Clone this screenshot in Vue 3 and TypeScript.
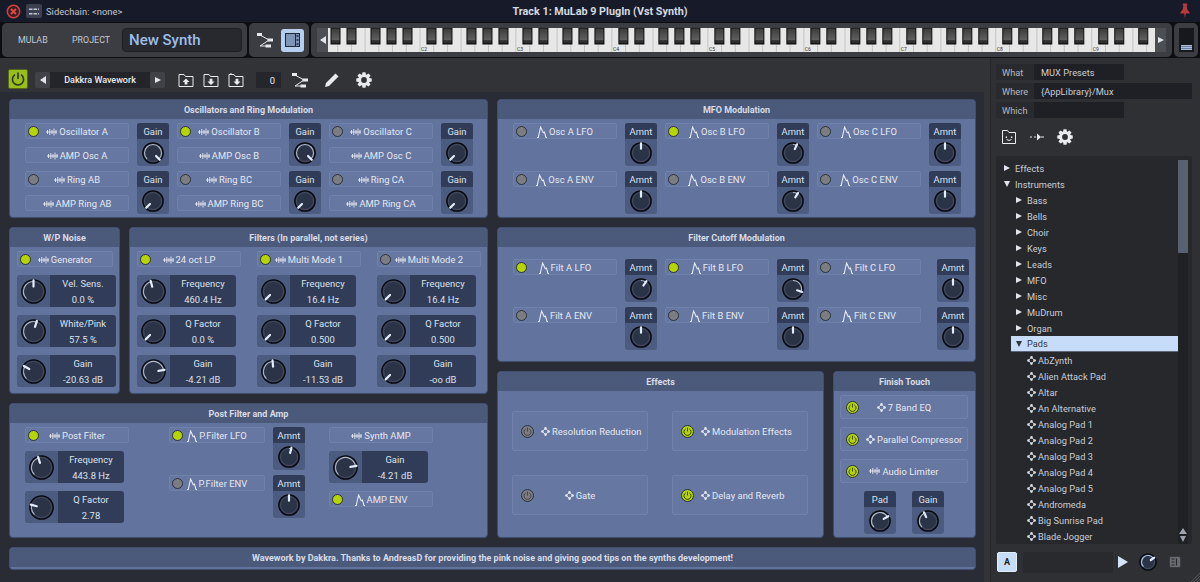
<script setup lang="ts">
import { h } from 'vue'

type Led = 'on' | 'off' | undefined
interface Item {
  t: 'btn' | 'box' | 'row' | 'gap'
  label?: string
  value?: string
  icon?: string
  led?: Led
  pow?: boolean
  a?: number
  bi?: boolean
}
interface Cell { cls?: string; items: Item[] }
interface Panel { cls: string; title: string; cells: Cell[] }

const btn = (label: string, icon: string, led?: Led, pow = false): Item => ({ t: 'btn', label, icon, led, pow })
const box = (label: string, a: number, bi = false): Item => ({ t: 'box', label, a, bi })
const row = (label: string, value: string, a: number): Item => ({ t: 'row', label, value, a })
const gap: Item = { t: 'gap' }

const panels: Panel[] = [
  { cls: 'p-osc', title: 'Oscillators and Ring Modulation', cells: [
    { items: [btn('Oscillator A', 'osc', 'on'), box('Gain', 135), btn('AMP Osc A', 'osc')] },
    { items: [btn('Oscillator B', 'osc', 'on'), box('Gain', 135), btn('AMP Osc B', 'osc')] },
    { items: [btn('Oscillator C', 'osc', 'off'), box('Gain', -135), btn('AMP Osc C', 'osc')] },
    { items: [btn('Ring AB', 'osc', 'off'), box('Gain', -135), btn('AMP Ring AB', 'osc')] },
    { items: [btn('Ring BC', 'osc', 'off'), box('Gain', -135), btn('AMP Ring BC', 'osc')] },
    { items: [btn('Ring CA', 'osc', 'off'), box('Gain', -135), btn('AMP Ring CA', 'osc')] },
  ] },
  { cls: 'p-mfo', title: 'MFO Modulation', cells: [
    { items: [btn('Osc A LFO', 'env', 'off'), box('Amnt', 0, true)] },
    { items: [btn('Osc B LFO', 'env', 'on'), box('Amnt', 25, true)] },
    { items: [btn('Osc C LFO', 'env', 'off'), box('Amnt', 0, true)] },
    { items: [btn('Osc A ENV', 'env', 'off'), box('Amnt', 0, true)] },
    { items: [btn('Osc B ENV', 'env', 'off'), box('Amnt', 32, true)] },
    { items: [btn('Osc C ENV', 'env', 'off'), box('Amnt', 0, true)] },
  ] },
  { cls: 'p-noise', title: 'W/P Noise', cells: [
    { cls: 'col', items: [btn('Generator', 'osc', 'on'), row('Vel. Sens.', '0.0 %', 0), row('White/Pink', '57.5 %', 18), row('Gain', '-20.63 dB', -60)] },
  ] },
  { cls: 'p-filt', title: 'Filters (In parallel, not series)', cells: [
    { cls: 'col', items: [btn('24 oct LP', 'osc', 'on'), row('Frequency', '460.4 Hz', -15), row('Q Factor', '0.0 %', -135), row('Gain', '-4.21 dB', 82)] },
    { cls: 'col', items: [btn('Multi Mode 1', 'osc', 'on'), row('Frequency', '16.4 Hz', -135), row('Q Factor', '0.500', -135), row('Gain', '-11.53 dB', -5)] },
    { cls: 'col', items: [btn('Multi Mode 2', 'osc', 'off'), row('Frequency', '16.4 Hz', -135), row('Q Factor', '0.500', -135), row('Gain', '-oo dB', -135)] },
  ] },
  { cls: 'p-cut', title: 'Filter Cutoff Modulation', cells: [
    { items: [btn('Filt A LFO', 'env', 'on'), box('Amnt', 35, true)] },
    { items: [btn('Filt B LFO', 'env', 'on'), box('Amnt', 108, true)] },
    { cls: 'wide', items: [btn('Filt C LFO', 'env', 'off'), box('Amnt', 0, true)] },
    { items: [btn('Filt A ENV', 'env', 'off'), box('Amnt', 0, true)] },
    { items: [btn('Filt B ENV', 'env', 'off'), box('Amnt', 0, true)] },
    { cls: 'wide', items: [btn('Filt C ENV', 'env', 'off'), box('Amnt', 0, true)] },
  ] },
  { cls: 'p-post', title: 'Post Filter and Amp', cells: [
    { cls: 'col', items: [btn('Post Filter', 'osc', 'on'), row('Frequency', '443.8 Hz', -18), row('Q Factor', '2.78', -75)] },
    { cls: 'pf-mid', items: [btn('P.Filter LFO', 'env', 'on'), box('Amnt', 15, true), gap, btn('P.Filter ENV', 'env', 'off'), box('Amnt', 0, true)] },
    { cls: 'col pf-amp', items: [btn('Synth AMP', 'osc'), row('Gain', '-4.21 dB', 82), btn('AMP ENV', 'env', 'on')] },
  ] },
  { cls: 'p-fx', title: 'Effects', cells: [
    { items: [btn('Resolution Reduction', 'mux', 'off', true)] },
    { items: [btn('Modulation Effects', 'mux', 'on', true)] },
    { items: [btn('Gate', 'mux', 'off', true)] },
    { items: [btn('Delay and Reverb', 'mux', 'on', true)] },
  ] },
  { cls: 'p-fin', title: 'Finish Touch', cells: [
    { items: [btn('7 Band EQ', 'mux', 'on', true), btn('Parallel Compressor', 'mux', 'on', true), btn('Audio Limiter', 'osc', 'on', true), box('Pad', 60), box('Gain', -25)] },
  ] },
  { cls: 'p-foot', title: 'Wavework by Dakkra. Thanks to AndreasD for providing the pink noise and giving good tips on the synths development!', cells: [] },
]

const tree = [
  { label: 'Effects', lv: 0, open: false },
  { label: 'Instruments', lv: 0, open: true },
  ...['Bass', 'Bells', 'Choir', 'Keys', 'Leads', 'MFO', 'Misc', 'MuDrum', 'Organ'].map((label) => ({ label, lv: 1, open: false })),
  { label: 'Pads', lv: 1, open: true, sel: true },
  ...['AbZynth', 'Alien Attack Pad', 'Altar', 'An Alternative', 'Analog Pad 1', 'Analog Pad 2', 'Analog Pad 3', 'Analog Pad 4', 'Analog Pad 5', 'Andromeda', 'Big Sunrise Pad', 'Blade Jogger'].map((label) => ({ label, lv: 2, open: false })),
]

/* Keyboard geometry: octave = 96px, first (clipped) C sits 4px left of the visible edge */
const OCT = 95.97
const whites: number[] = []
const blacks: number[] = []
const labels: { x: number; t: string }[] = []
for (let o = 0; o < 9; o++) {
  const base = -4 + o * OCT
  for (let i = 0; i < 7; i++) whites.push(base + (i * OCT) / 7)
  for (const b of [7, 23, 47, 63, 79]) if (base + b < 815) blacks.push(base + b)
  if (o > 0) labels.push({ x: base + 1, t: 'C' + (o + 1) })
}

const polar = (r: number, deg: number, c: number) => {
  const t = ((deg - 90) * Math.PI) / 180
  return `${(c + r * Math.cos(t)).toFixed(2)} ${(c + r * Math.sin(t)).toFixed(2)}`
}

const Knob = (p: { a: number; d: number; bi?: boolean; blue?: boolean }) => {
  const c = p.d / 2
  const r = c - 0.8
  const from = p.bi ? 0 : -135
  const kids = [
    h('circle', { cx: c, cy: c, r, fill: '#2b3346', stroke: '#07080c', 'stroke-width': 1.3 }),
    h('circle', { cx: c, cy: c, r: r - 1.7, fill: 'none', stroke: '#465168', 'stroke-width': 0.9 }),
  ]
  if (p.a !== from) {
    const lo = Math.min(from, p.a)
    const hi = Math.max(from, p.a)
    kids.push(h('path', {
      d: `M${polar(r - 1.7, lo, c)}A${r - 1.7} ${r - 1.7} 0 ${hi - lo > 180 ? 1 : 0} 1 ${polar(r - 1.7, hi, c)}`,
      fill: 'none', stroke: p.blue ? '#a9c8f0' : '#aeb8ca', 'stroke-width': 1.1,
    }))
  }
  kids.push(h('path', {
    d: `M${polar(r * 0.42, p.a, c)}L${polar(r - 0.6, p.a, c)}`,
    stroke: '#e2ecfb', 'stroke-width': 2.2, 'stroke-linecap': 'round',
  }))
  return h('svg', { width: p.d, height: p.d, viewBox: `0 0 ${p.d} ${p.d}` }, kids)
}

const gearPath = (() => {
  const n = 8
  const pts: string[] = []
  for (let i = 0; i < n; i++) {
    const s = (i * 360) / n
    pts.push(polar(7.9, s - 11, 8), polar(7.9, s + 11, 8), polar(5.7, s + 20, 8), polar(5.7, s + 25, 8))
  }
  return `M${pts.join('L')}Z M8 5.1A2.9 2.9 0 1 0 8 10.9A2.9 2.9 0 1 0 8 5.1Z`
})()

interface IconDef { w: number; h: number; s?: string[]; f?: string[]; sw?: number }
const ICONS: Record<string, IconDef> = {
  osc: { w: 11, h: 8, s: ['M0 4H11M1.5 2v4M3.8 1v6M6 2v4M8 .5v7M10 2v4'], sw: 0.9 },
  env: { w: 10, h: 12, s: ['M0 11.5H1.2L3.6 1L6.2 6.8L7.4 6.1L9 11.5H10'], sw: 1.1 },
  mux: { w: 9, h: 9, s: ['M4.5 1.3L7.7 4.5L4.5 7.7L1.3 4.5Z'], f: ['M3.2 1.4a1.3 1.3 0 1 0 2.6 0a1.3 1.3 0 1 0-2.6 0M3.2 7.6a1.3 1.3 0 1 0 2.6 0a1.3 1.3 0 1 0-2.6 0M.1 4.5a1.3 1.3 0 1 0 2.6 0a1.3 1.3 0 1 0-2.6 0M6.3 4.5a1.3 1.3 0 1 0 2.6 0a1.3 1.3 0 1 0-2.6 0'], sw: 0.9 },
  power: { w: 16, h: 16, s: ['M5 3.6A5.6 5.6 0 1 0 11 3.6M8 1.5V8'], sw: 1.6 },
  powerS: { w: 9, h: 9, s: ['M2.7 1.9A3.5 3.5 0 1 0 6.3 1.9M4.5 .7V4.5'], sw: 1 },
  graph: { w: 16, h: 16, f: ['M0 1h5v3H0zM10.5 6.5h5.5v3h-5.5zM8.5 12.5h5.5v3H8.5z'], s: ['M3 3L12 8L3 14H9'], sw: 1 },
  pencil: { w: 16, h: 16, f: ['M1 15L2 11L11.5 1.5L14.5 4.5L5 14Z'] },
  gear: { w: 16, h: 16, f: [gearPath] },
  folderUp: { w: 16, h: 16, s: ['M1 2.5H6L7.5 4.5H15V14.5H1Z'], f: ['M8 6.5L11.5 10H9.4V12.6H6.6V10H4.5Z'], sw: 1 },
  folderDown: { w: 16, h: 16, s: ['M1 2.5H6L7.5 4.5H15V14.5H1Z'], f: ['M8 13L4.5 9.5H6.6V6.8H9.4V9.5H11.5Z'], sw: 1 },
  folderIn: { w: 16, h: 16, s: ['M1 2.5H6L7.5 4.5H15V14.5H1Z', 'M3 1V3'], f: ['M9 13L5.5 9.5H7.6V6.8H10.4V9.5H12.5Z'], sw: 1 },
  folderFace: { w: 16, h: 16, s: ['M1.5 1.5H6.5L8 3.5H14.5V14.5H1.5Z', 'M5.5 10.5Q8 12.5 10.5 10.5'], f: ['M4.7 7.5h1.4v1.4H4.7zM9.9 7.5h1.4v1.4H9.9z'], sw: 1 },
  dotArrow: { w: 16, h: 16, s: ['M1 8h2M5 8h2M12 8h3'], f: ['M8 4.5L12 8L8 11.5Z'], sw: 1.2 },
  pin: { w: 12, h: 16, f: ['M4 .5H8L8.3 2.5H7.6L8.3 6.6L10.5 9.3V10.4H6.8L6 15.5L5.2 10.4H1.5V9.3L3.7 6.6L4.4 2.5H3.7Z'] },
}

const Ico = (p: { n: string }) => {
  const d = ICONS[p.n]
  const kids = [
    ...(d.s || []).map((x) => h('path', { d: x, fill: 'none', stroke: 'currentColor', 'stroke-width': d.sw || 1 })),
    ...(d.f || []).map((x) => h('path', { d: x, fill: 'currentColor', 'fill-rule': 'evenodd' })),
  ]
  return h('svg', { width: d.w, height: d.h, viewBox: `0 0 ${d.w} ${d.h}` }, kids)
}
</script>

<template>
  <div class="app">
    <header class="title">
      <svg class="close" width="15" height="15" viewBox="0 0 15 15">
        <circle cx="7.5" cy="7.5" r="6.2" fill="#3a1d24" stroke="#c8453f" stroke-width="1.5" />
        <path d="M5 5l5 5M10 5l-5 5" stroke="#e0443f" stroke-width="2.2" />
      </svg>
      <span class="side-ico">
        <svg width="10" height="7" viewBox="0 0 10 7"><path d="M0 1.2h10M0 5.8h10" stroke="#c3c8d2" stroke-width="1.6" stroke-dasharray="3.5 1" /></svg>
      </span>
      <span class="side">Sidechain: &lt;none&gt;</span>
      <span class="title-text">Track 1: MuLab 9 PlugIn (Vst Synth)</span>
      <Ico n="pin" class="pin" />
    </header>

    <div class="top">
      <div class="seg seg-a">
        <span class="tab tab1">MULAB</span>
        <span class="tab tab2">PROJECT</span>
        <div class="synth-name">New Synth</div>
      </div>
      <div class="seg seg-b">
        <Ico n="graph" class="top-graph" />
        <span class="view-btn">
          <svg width="15" height="14" viewBox="0 0 15 14">
            <rect x=".5" y=".5" width="14" height="13" fill="#7f95b8" stroke="#20283a" />
            <path d="M10.5 .5v13" stroke="#20283a" />
            <path d="M11.5 3h2M11.5 7h2M11.5 11h2" stroke="#20283a" stroke-width="1.4" />
          </svg>
        </span>
      </div>
      <div class="seg seg-c">
        <span class="kb-arrow"><i class="tri tri-l" /></span>
        <svg class="keys" width="827" height="24" viewBox="0 0 827 24">
          <defs>
            <linearGradient id="blk" x1="0" y1="0" x2="0" y2="1">
              <stop offset="0" stop-color="#3a3a3a" />
              <stop offset=".75" stop-color="#606060" />
              <stop offset=".76" stop-color="#3a3a3a" />
              <stop offset="1" stop-color="#222" />
            </linearGradient>
          </defs>
          <rect width="827" height="24" fill="#e7e7e7" />
          <path v-for="x in whites" :key="'w' + x" :d="`M${x.toFixed(1)} 0V24`" stroke="#c4c4c4" stroke-width="1" />
          <rect v-for="x in blacks" :key="'b' + x" :x="x" y="0" width="9" height="16" fill="url(#blk)" stroke="#0a0a0a" stroke-width="1" />
          <text v-for="l in labels" :key="l.t" :x="l.x" y="22.5" class="key-label">{{ l.t }}</text>
        </svg>
        <span class="kb-arrow"><i class="tri tri-r" /></span>
      </div>
      <div class="seg seg-d">
        <div class="slot"><i class="slot-level" /></div>
      </div>
    </div>

    <div class="main">
      <div class="plugin">
        <div class="bar">
          <button class="power"><Ico n="power" /></button>
          <div class="preset">
            <span class="pre-arrow"><i class="tri tri-l" /></span>
            <span class="pre-name">Dakkra Wavework</span>
            <span class="pre-arrow"><i class="tri tri-r" /></span>
          </div>
          <Ico n="folderUp" class="bi bi-first" />
          <Ico n="folderDown" class="bi" />
          <Ico n="folderIn" class="bi" />
          <span class="num">0</span>
          <Ico n="graph" class="bi bi-g" />
          <Ico n="pencil" class="bi bi-w" />
          <Ico n="gear" class="bi bi-w" />
        </div>

        <div class="stage">
          <section v-for="p in panels" :key="p.cls" class="panel" :class="p.cls">
            <h2 class="panel-title">{{ p.title }}</h2>
            <div class="panel-body">
              <div v-for="(c, ci) in p.cells" :key="ci" class="cell" :class="c.cls">
                <template v-for="(it, ii) in c.items" :key="ii">
                  <div v-if="it.t === 'btn'" class="btn">
                    <span class="led-slot">
                      <span v-if="it.led" class="led" :class="it.led">
                        <Ico v-if="it.pow" n="powerS" />
                      </span>
                    </span>
                    <span class="btn-label"><Ico :n="it.icon!" class="btn-ico" />{{ it.label }}</span>
                  </div>
                  <div v-else-if="it.t === 'box'" class="box">
                    <span class="box-title">{{ it.label }}</span>
                    <span class="box-knob"><Knob :a="it.a!" :d="22" :bi="it.bi" /></span>
                  </div>
                  <div v-else-if="it.t === 'row'" class="kr">
                    <span class="kr-knob"><Knob :a="it.a!" :d="25" /></span>
                    <span class="kr-text"><span>{{ it.label }}</span><span>{{ it.value }}</span></span>
                  </div>
                  <div v-else class="spacer" />
                </template>
              </div>
            </div>
          </section>
        </div>
      </div>

      <aside class="browser">
        <div class="field"><span class="f-label">What</span><span class="f-val short">MUX Presets</span></div>
        <div class="field"><span class="f-label">Where</span><span class="f-val">{AppLibrary}/Mux</span></div>
        <div class="field"><span class="f-label">Which</span><span class="f-val short" /></div>
        <div class="b-tools">
          <Ico n="folderFace" />
          <Ico n="dotArrow" />
          <Ico n="gear" />
        </div>
        <div class="tree">
          <ul class="tree-list">
            <li v-for="n in tree" :key="n.label" class="node" :class="['lv' + n.lv, { sel: (n as any).sel }]">
              <i v-if="n.lv < 2" class="tri" :class="n.open ? 'tri-d' : 'tri-r'" />
              <Ico v-else n="mux" class="node-ico" />
              <span>{{ n.label }}</span>
            </li>
          </ul>
          <div class="scroll">
            <i class="thumb" />
            <i class="scroll-fill" />
            <i class="tri tri-u" />
            <i class="tri tri-d" />
          </div>
        </div>
        <div class="b-foot">
          <button class="a-btn">A</button>
          <div class="a-input" />
          <i class="play" />
          <Knob :a="55" :d="18" :blue="true" class="b-knob" />
          <svg class="b-ico" width="12" height="12" viewBox="0 0 12 12">
            <rect x=".5" y=".5" width="11" height="11" rx="1.5" fill="#6a6c72" stroke="#3a3b40" />
            <path d="M2.5 3h3M2.5 6h3M2.5 9h3M7.5 2.5v7" stroke="#26272b" stroke-width="1.2" />
          </svg>
          <svg class="grip" width="10" height="10" viewBox="0 0 10 10">
            <path d="M10 1L1 10M10 4L4 10M10 7L7 10" stroke="#55575c" stroke-width="1" />
          </svg>
        </div>
      </aside>
    </div>
  </div>
</template>

<style scoped>
.app {
  width: 1200px;
  height: 582px;
  overflow: hidden;
  display: flex;
  flex-direction: column;
  background: #323337;
  font: 400 9.4px/17px Roboto, "Liberation Sans", sans-serif;
  letter-spacing: 0.05px;
  color: #dfe3ec;
}
.title {
  height: 22px;
  flex: none;
  display: flex;
  align-items: center;
  position: relative;
  background: #171b29;
  padding-left: 6px;
}
.side-ico {
  margin-left: 5px;
  width: 16px;
  height: 14px;
  background: #3b4050;
  border-radius: 2px;
  display: flex;
  align-items: center;
  justify-content: center;
}
.side {
  margin-left: 4px;
  font-size: 9.4px;
  color: #c4c8d2;
}
.title-text {
  position: absolute;
  left: 0;
  right: 0;
  text-align: center;
  font-weight: 700;
  font-size: 10.8px;
  letter-spacing: 0;
  color: #d6d9e0;
}
.pin {
  position: absolute;
  right: 9px;
  top: 3px;
  color: #b8393a;
}

.top {
  height: 36px;
  flex: none;
  display: flex;
  gap: 2px;
  box-sizing: border-box;
  padding: 1px 2px;
  background: #0d0e11;
}
.seg {
  background: #3c3d42;
  border-radius: 5px;
  display: flex;
  align-items: center;
}
.seg-a {
  width: 245px;
  padding-left: 16px;
  box-sizing: border-box;
}
.tab {
  color: #c6cad2;
  font-size: 8.8px;
}
.tab1 {
  width: 30px;
}
.tab2 {
  margin-left: 24px;
  width: 38px;
}
.synth-name {
  margin-left: 12px;
  width: 120px;
  height: 24px;
  background: #27292f;
  border-radius: 4px;
  border: 1px solid #1d1e22;
  box-sizing: border-box;
  padding-left: 6px;
  font-size: 15px;
  line-height: 22px;
  font-weight: 500;
  letter-spacing: 0;
  color: #9dbde9;
}
.seg-b {
  width: 60px;
  padding-left: 8px;
  box-sizing: border-box;
}
.top-graph {
  color: #e4e6ea;
}
.view-btn {
  margin-left: 8px;
  width: 23px;
  height: 23px;
  background: #b6cfee;
  border-radius: 3px;
  display: flex;
  align-items: center;
  justify-content: center;
}
.seg-c {
  width: 861px;
  padding-left: 6px;
  box-sizing: border-box;
}
.kb-arrow {
  width: 11px;
  height: 24px;
  flex: none;
  background: #4d4e54;
  display: flex;
  align-items: center;
  justify-content: center;
}
.keys {
  flex: none;
  display: block;
}
.key-label {
  font-size: 5px;
  font-family: Roboto, sans-serif;
  fill: #333;
  letter-spacing: 0;
}
.seg-d {
  width: 24px;
  justify-content: center;
}
.slot {
  width: 15px;
  height: 24px;
  background: #17181c;
  position: relative;
  display: flex;
  align-items: flex-end;
  justify-content: center;
  padding-bottom: 2px;
  box-sizing: border-box;
}
.slot-level {
  width: 11px;
  height: 5px;
  background: repeating-linear-gradient(#a6bcdc 0 1px, #6d80a0 1px 2px);
}

.tri {
  display: block;
  width: 0;
  height: 0;
  flex: none;
}
.tri-l {
  border-top: 4px solid transparent;
  border-bottom: 4px solid transparent;
  border-right: 6px solid #dfe5ee;
}
.tri-r {
  border-top: 3.5px solid transparent;
  border-bottom: 3.5px solid transparent;
  border-left: 6px solid #dfe5ee;
}
.tri-d {
  border-left: 3.5px solid transparent;
  border-right: 3.5px solid transparent;
  border-top: 6px solid #dfe5ee;
}
.tri-u {
  border-left: 4px solid transparent;
  border-right: 4px solid transparent;
  border-bottom: 6px solid #9ca3ae;
}

.main {
  flex: 1;
  min-height: 0;
  display: flex;
}
.plugin {
  width: 990px;
  flex: none;
  display: flex;
  flex-direction: column;
  background: #323337;
}
.bar {
  height: 34px;
  flex: none;
  box-sizing: border-box;
  padding: 11px 0 0 8px;
  display: flex;
  align-items: flex-start;
  color: #e8eaee;
}
.power {
  width: 20px;
  height: 20px;
  padding: 1px;
  margin-top: 0;
  border: 1px solid #55651a;
  border-radius: 2px;
  background: #98bd1e;
  color: #2a3410;
  display: flex;
  align-items: center;
  justify-content: center;
}
.preset {
  margin-left: 7px;
  width: 130px;
  height: 16px;
  display: flex;
  margin-top: 3px;
}
.pre-arrow {
  width: 15px;
  background: #414248;
  display: flex;
  align-items: center;
  justify-content: center;
  border-radius: 2px;
}
.pre-name {
  flex: 1;
  background: #24252b;
  text-align: center;
  line-height: 17px;
  font-weight: 500;
  font-size: 9px;
  letter-spacing: 0;
}
.bi {
  margin-top: 3px;
}
.bi-first {
  margin-left: 13px;
}
.bi + .bi {
  margin-left: 9px;
}
.num {
  margin: 3px 0 0 12px;
  width: 25px;
  height: 16px;
  box-sizing: border-box;
  background: #25262b;
  text-align: right;
  padding-right: 6px;
}
.bi.bi-g {
  margin-left: 11px;
}
.bi.bi-w {
  margin-left: 16px;
}

.stage {
  flex: 1;
  width: 984px;
  box-sizing: border-box;
  padding: 7px 8px 0 9px;
  background: #292c35;
  display: grid;
  grid-template-columns: 111px 359px 327px 143px;
  grid-template-rows: 119px 135px 23px 135px 23px;
  gap: 9px;
}
.panel {
  background: #62739e;
  border: 1px solid #414e6d;
  border-radius: 4px;
  box-sizing: border-box;
  margin: 0;
  overflow: hidden;
  display: flex;
  flex-direction: column;
}
.panel-title {
  margin: 0;
  flex: none;
  height: 19px;
  background: #4b5a7b;
  text-align: center;
  font-size: 9px;
  font-weight: 700;
  line-height: 20px;
  letter-spacing: 0;
  color: #d8dce6;
}
.panel-body {
  flex: 1;
  display: flex;
  flex-wrap: wrap;
  align-content: flex-start;
  box-sizing: border-box;
}

.p-osc { grid-area: 1 / 1 / 2 / 3; }
.p-mfo { grid-area: 1 / 3 / 2 / 5; }
.p-noise { grid-area: 2 / 1 / 4 / 2; }
.p-filt { grid-area: 2 / 2 / 4 / 3; }
.p-cut { grid-area: 2 / 3 / 3 / 5; }
.p-post { grid-area: 4 / 1 / 5 / 3; }
.p-fx { grid-area: 3 / 3 / 5 / 4; }
.p-fin { grid-area: 3 / 4 / 5 / 5; }
.p-foot { grid-area: 5 / 1 / 6 / 5; }

.cell {
  display: grid;
  grid-template-columns: 104px 32px;
  grid-auto-rows: 16px;
  column-gap: 8px;
  row-gap: 8px;
  align-items: start;
}
.cell.col {
  display: flex;
  flex-direction: column;
  align-items: flex-start;
  gap: 8px;
  width: 104px;
}
.col .btn {
  width: 104px;
}
.p-osc .panel-body,
.p-mfo .panel-body,
.p-cut .panel-body {
  padding: 4px 0 0 15px;
  column-gap: 8px;
  row-gap: 5px;
}
.p-cut .panel-body {
  padding-top: 12px;
}
.p-osc .cell,
.p-mfo .cell,
.p-cut .cell {
  height: 43px;
}
.p-cut .cell.wide {
  column-gap: 16px;
}

.p-noise .panel-body {
  padding: 4px 0 0 7px;
}
.p-noise .btn {
  width: 96px;
}
.p-filt .panel-body {
  padding: 4px 0 0 7px;
  column-gap: 16px;
}
.p-post .panel-body {
  padding: 4px 0 0 15px;
}
.pf-mid {
  margin-left: 40px;
  grid-template-columns: 96px 32px;
}
.cell.pf-amp {
  margin-left: 24px;
}
.p-fx .panel-body {
  padding: 20px 0 0 14px;
  column-gap: 24px;
  row-gap: 24px;
}
.p-fx .cell {
  display: block;
}
.p-fx .btn {
  width: 136px;
  height: 40px;
  padding: 0 8px;
  grid-template-columns: minmax(20px, 1fr) auto 1fr;
}
.p-fin .panel-body {
  padding: 4px 0 0 6px;
}
.p-fin .cell {
  width: 128px;
  display: flex;
  flex-wrap: wrap;
  justify-content: center;
  column-gap: 16px;
  row-gap: 8px;
}
.p-fin .btn {
  width: 128px;
  height: 24px;
  padding: 0 5px;
  grid-template-columns: minmax(20px, 1fr) auto 1fr;
}

.btn {
  box-sizing: border-box;
  height: 16px;
  grid-column: 1;
  display: grid;
  grid-template-columns: 1fr auto 1fr;
  align-items: center;
  padding: 0 2px;
  background: #6677a2;
  border: 1px solid #7082ac;
  border-radius: 2px;
  white-space: nowrap;
  color: #e6e9f1;
}
.led-slot {
  display: flex;
  align-items: center;
}
.led {
  width: 11px;
  height: 11px;
  box-sizing: border-box;
  border-radius: 50%;
  border: 1px solid #2a3040;
  display: flex;
  align-items: center;
  justify-content: center;
}
.led.on {
  background: #b5d400;
  color: #3c4700;
}
.led.off {
  background: #7c7d80;
  color: #45464a;
}
.btn-label {
  display: flex;
  align-items: center;
  line-height: 15px;
}
.btn-ico {
  margin-right: 2px;
  flex: none;
  color: #e6eaf2;
}
.p-fx .led,
.p-fin .led {
  width: 13px;
  height: 13px;
}

.box {
  grid-column: 2;
  grid-row: span 2;
  width: 32px;
  height: 43px;
  background: #4c5b80;
  border-radius: 3px;
  overflow: hidden;
  display: flex;
  flex-direction: column;
  align-items: center;
}
.box-title {
  width: 100%;
  height: 16px;
  flex: none;
  background: #303c58;
  text-align: center;
  color: #dfe3ec;
}
.box-knob {
  flex: 1;
  display: flex;
  align-items: center;
  justify-content: center;
}
.spacer {
  grid-column: 1;
}

.kr {
  width: 99px;
  height: 32px;
  flex: none;
  display: flex;
  border-radius: 3px;
  overflow: hidden;
}
.kr-knob {
  width: 33px;
  flex: none;
  background: #4c5b80;
  display: flex;
  align-items: center;
  justify-content: center;
}
.kr-text {
  flex: 1;
  background: #303c58;
  display: flex;
  flex-direction: column;
  align-items: center;
  color: #dfe3ec;
}
.kr-text span {
  height: 16px;
}

/* Browser */
.browser {
  flex: 1;
  min-width: 0;
  background: #2f3034;
  border-left: 1px solid #25262a;
  box-sizing: border-box;
  padding: 6px 8px 0 5px;
  display: flex;
  flex-direction: column;
  font-size: 9.2px;
  color: #c9ced8;
}
.field {
  height: 16px;
  display: flex;
  margin-bottom: 3px;
}
.f-label {
  width: 38px;
  padding-left: 6px;
  box-sizing: border-box;
  background: #292a2e;
  color: #b5b9c2;
}
.f-val {
  flex: 1;
  background: #1f2025;
  padding-left: 7px;
}
.f-val.short {
  flex: none;
  width: 90px;
  box-sizing: border-box;
}
.b-tools {
  height: 35px;
  flex: none;
  box-sizing: border-box;
  padding: 0 0 3px 5px;
  display: flex;
  align-items: center;
  gap: 12px;
  color: #e9ebef;
}
.tree {
  height: 388px;
  flex: none;
  width: 196px;
  background: #26282b;
  border-radius: 3px;
  display: flex;
  box-sizing: border-box;
  padding: 4px 4px 0 0;
  overflow: hidden;
}
.tree-list {
  list-style: none;
  margin: 0;
  padding: 0;
  width: 182px;
  flex: none;
  height: 384px;
  overflow: hidden;
}
.node {
  height: 16px;
  display: flex;
  align-items: center;
  box-sizing: border-box;
  color: #c9ced8;
}
.node .tri {
  margin-right: 5px;
}
.lv0 { padding-left: 8px; }
.lv1 { padding-left: 20px; }
.lv2 { padding-left: 31px; }
.node-ico {
  margin-right: 2px;
  color: #dfe3ea;
}
.node.sel {
  background: #c7dcf8;
  color: #33363d;
  margin-left: 15px;
  padding-left: 5px;
  border-bottom: 1px solid #5b6678;
}
.node.sel .tri {
  border-top-color: #33363d;
}
.scroll {
  width: 10px;
  flex: none;
  background: #202125;
  height: 384px;
  display: flex;
  flex-direction: column;
  align-items: center;
}
.thumb {
  width: 10px;
  height: 93px;
  flex: none;
  background: #576172;
}
.scroll-fill {
  flex: 1;
}
.scroll .tri-d {
  border-top-color: #9ca3ae;
  margin: 2px 0 2px;
}
.b-foot {
  flex: 1;
  position: relative;
  display: flex;
  align-items: center;
  padding: 0 0 2px 1px;
}
.a-btn {
  width: 20px;
  height: 20px;
  padding: 0;
  background: #c7dcf8;
  border: 1px solid #e3eefb;
  border-radius: 2px;
  font: 700 9px Roboto, sans-serif;
  color: #20242c;
}
.a-input {
  margin-left: 6px;
  width: 90px;
  height: 21px;
  background: #292a2e;
}
.play {
  margin-left: 5px;
  width: 0;
  height: 0;
  border-top: 6px solid transparent;
  border-bottom: 6px solid transparent;
  border-left: 10px solid #d6e3f6;
}
.b-knob {
  margin-left: 11px;
  display: block;
}
.b-ico {
  margin-left: 12px;
}
.grip {
  position: absolute;
  right: -8px;
  bottom: 0;
}
</style>

<style>
html, body {
  margin: 0;
  background: #323337;
}
</style>
